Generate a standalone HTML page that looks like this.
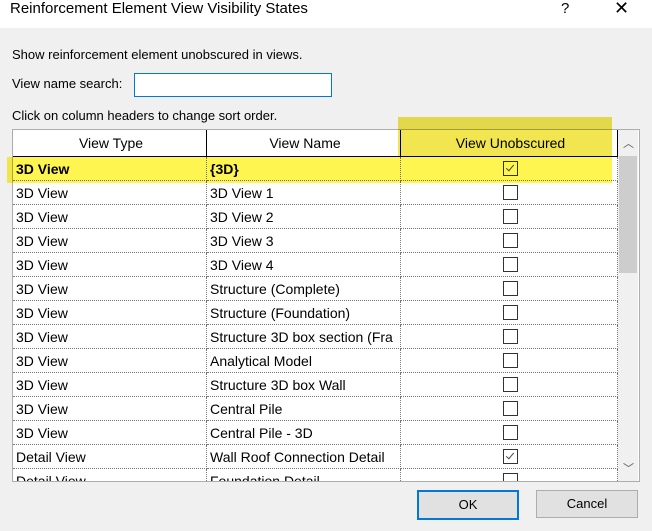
<!DOCTYPE html><html><head><style>
body{margin:0;width:652px;height:531px;background:#f0f0f0;font-family:"Liberation Sans",sans-serif;position:relative;overflow:hidden;color:#000}
.a{position:absolute}
.title{left:0;top:0;width:652px;height:28px;background:#fff;font-size:15px}
.grid{left:12px;top:129px;width:626px;height:351px;background:#fff;border:1px solid #adadad;overflow:hidden}
table{border-collapse:collapse;font-size:14px;position:absolute;left:0;top:0}
td,th{height:23px;padding:0 0 0 3px;white-space:nowrap;overflow:hidden;border-right:1px dotted #777;border-bottom:1px dotted #777}
th{font-weight:normal;text-align:center;height:26px;border:1px solid #000;border-top:none;border-left:none}
.cb{display:block;margin:0 auto;width:13px;height:13px;border:1px solid #333;background:#fff;position:relative}
.ck:after{content:"";position:absolute;left:4px;top:1px;width:3px;height:7px;border:solid #444;border-width:0 1px 1px 0;transform:rotate(40deg)}
.btn{height:26px;width:100px;border:1px solid #adadad;background:#e1e1e1;font-size:13px;text-align:center;line-height:26px}
.y{mix-blend-mode:multiply}
</style></head><body>
<div class="a title"><span class="a" style="left:10px;top:0px">Reinforcement Element View Visibility States</span><span class="a" style="left:561px;top:0px">?</span><span class="a" style="left:614px;top:-2px;font-size:18px">✕</span></div>
<div class="a" style="left:12px;top:47px;font-size:13px">Show reinforcement element unobscured in views.</div>
<div class="a" style="left:12px;top:76px;font-size:13px">View name search:</div>
<div class="a" style="left:134px;top:73px;width:196px;height:22px;background:#fff;border:1px solid #0078d7"></div>
<div class="a" style="left:12px;top:108px;font-size:13px">Click on column headers to change sort order.</div>
<div class="a grid">
<table>
<tr><th style="width:190px">View Type</th><th style="width:190px">View Name</th><th style="width:213px">View Unobscured</th></tr>
<tr style="font-weight:bold"><td>3D View</td><td>{3D}</td><td><span class="cb ck"></span></td></tr>
<tr><td>3D View</td><td>3D View 1</td><td><span class="cb"></span></td></tr>
<tr><td>3D View</td><td>3D View 2</td><td><span class="cb"></span></td></tr>
<tr><td>3D View</td><td>3D View 3</td><td><span class="cb"></span></td></tr>
<tr><td>3D View</td><td>3D View 4</td><td><span class="cb"></span></td></tr>
<tr><td>3D View</td><td>Structure (Complete)</td><td><span class="cb"></span></td></tr>
<tr><td>3D View</td><td>Structure (Foundation)</td><td><span class="cb"></span></td></tr>
<tr><td>3D View</td><td style="max-width:190px">Structure 3D box section (Fra</td><td><span class="cb"></span></td></tr>
<tr><td>3D View</td><td>Analytical Model</td><td><span class="cb"></span></td></tr>
<tr><td>3D View</td><td>Structure 3D box Wall</td><td><span class="cb"></span></td></tr>
<tr><td>3D View</td><td>Central Pile</td><td><span class="cb"></span></td></tr>
<tr><td>3D View</td><td>Central Pile - 3D</td><td><span class="cb"></span></td></tr>
<tr><td>Detail View</td><td>Wall Roof Connection Detail</td><td><span class="cb ck"></span></td></tr>
<tr><td>Detail View</td><td>Foundation Detail</td><td><span class="cb"></span></td></tr>
</table>
<div class="a" style="left:605px;top:0;width:20px;height:351px;background:#f0f0f0"></div>
<div class="a" style="left:606px;top:26px;width:18px;height:117px;background:#cdcdcd"></div>
<div class="a" style="left:610px;top:5px;font-size:11px;color:#555">︿</div>
<div class="a" style="left:610px;top:330px;font-size:11px;color:#555">﹀</div>
</div>
<div class="a y" style="left:398px;top:117px;width:214px;height:40px;background:#f2e650"></div>
<div class="a y" style="left:7px;top:157px;width:605px;height:26px;background:#fff550"></div>
<div class="a btn" style="left:417px;top:490px;border:2px solid #0078d7;width:98px">OK</div>
<div class="a btn" style="left:536px;top:490px">Cancel</div>
</body></html>
